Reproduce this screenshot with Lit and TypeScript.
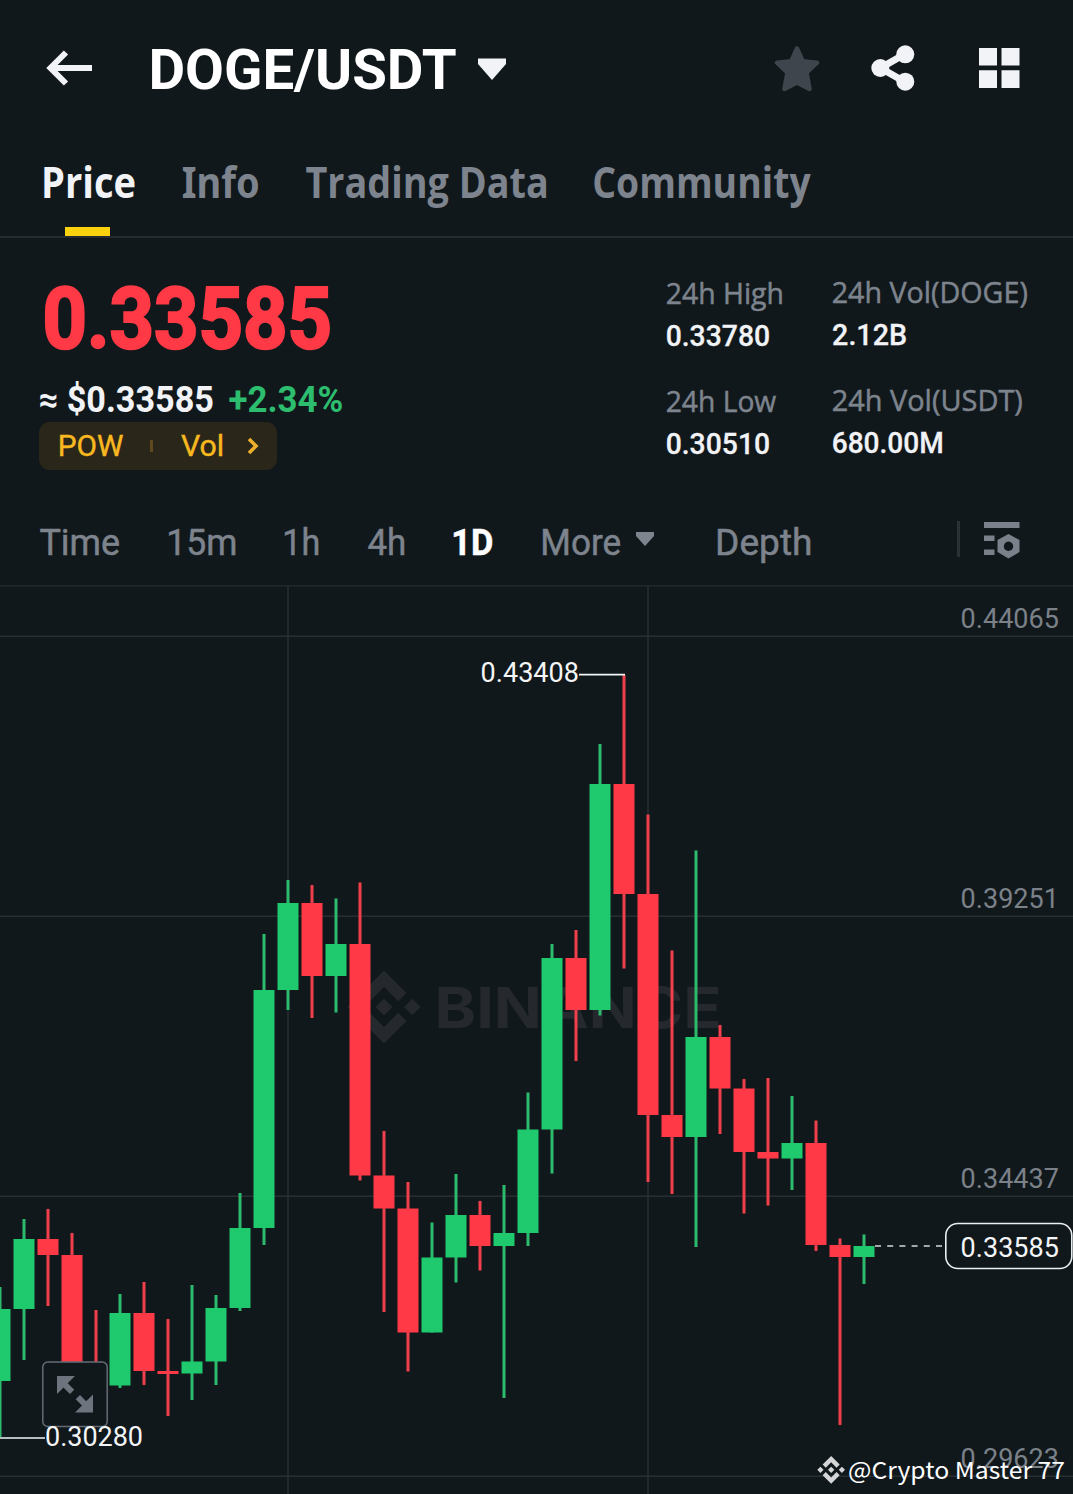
import { LitElement, html, svg, css } from "lit";
import { customElement, property, state } from "lit/decorators.js";
import { classMap } from "lit/directives/class-map.js";

/** A single line of text whose drawn ink spans about `width` pixels. */
@customElement("fit-text")
class FitText extends LitElement {
  static styles = css`
    :host { display: block; flex: none; white-space: nowrap; }
    .line { display: inline-block; transform-origin: 0 50%; }
  `;
  @property({ type: Number }) width = 0;
  @property() text = "";
  @state() private transform = "none";

  firstUpdated() {
    const cs = getComputedStyle(this);
    const size = parseFloat(cs.fontSize);
    const ctx = document.createElement("canvas").getContext("2d")!;
    // Ink bounds come back rounded to whole pixels, so measure enlarged.
    const zoom = 10;
    ctx.font = `${cs.fontWeight} ${size * zoom}px ${cs.fontFamily}`;
    const m = ctx.measureText(this.text);
    const left = m.actualBoundingBoxLeft / zoom;
    const ink = left + m.actualBoundingBoxRight / zoom;
    const scale = this.width / ink;
    this.transform = `translateX(${left * scale}px) scaleX(${scale})`;
    this.style.width = `${this.width}px`;
  }
  render() {
    return html`<span class="line" style="transform:${this.transform}">${this.text}</span>`;
  }
}

type Candle = [up: 0 | 1, high: number, top: number, bottom: number, low: number];

const CANDLES: Candle[] = [
  [1, 1287, 1309, 1381, 1437], [1, 1219, 1239, 1309, 1360], [0, 1209, 1239, 1255, 1306],
  [0, 1233, 1255, 1384, 1390], [0, 1310, 1384, 1386, 1400], [1, 1294, 1313, 1385.5, 1388],
  [0, 1282, 1313, 1371, 1385], [0, 1319, 1371, 1374, 1416], [1, 1285, 1361.5, 1373.5, 1400],
  [1, 1295, 1308, 1361.5, 1385], [1, 1193, 1228, 1308, 1311], [1, 934, 990, 1228, 1245],
  [1, 880, 903, 990, 1010], [0, 885, 903, 976, 1018], [1, 898.5, 944, 976, 1012.5],
  [0, 882.5, 944, 1175.5, 1180.5], [0, 1131, 1175.5, 1208.5, 1312], [0, 1182, 1208.5, 1332.5, 1371.5],
  [1, 1222.5, 1257.5, 1332.5, 1332.5], [1, 1174, 1215, 1257.5, 1282.5], [0, 1201, 1215, 1246, 1270.5],
  [1, 1185, 1233, 1246, 1398], [1, 1092.5, 1129.5, 1233, 1246], [1, 944, 958, 1129.5, 1173.5],
  [0, 930, 958, 1010, 1061], [1, 744, 784, 1010, 1015.5], [0, 675, 784, 894, 968.5],
  [0, 814.5, 894, 1115, 1182], [0, 950.5, 1115, 1137, 1194], [1, 850.5, 1037, 1137, 1247],
  [0, 1025, 1037, 1088.5, 1134], [0, 1079, 1088.5, 1152, 1213.5], [0, 1078, 1152, 1158.5, 1205.5],
  [1, 1096, 1143, 1158.5, 1190], [0, 1120.5, 1143, 1245, 1251], [0, 1238.5, 1245, 1257, 1425],
  [1, 1234.5, 1246, 1257, 1284],
];
const PITCH = 24;
const BODY = 21;

const LEVELS: [number, string][] = [[636, "0.44065"], [916, "0.39251"], [1196, "0.34437"], [1476, "0.29623"]];

const LOGO =
  "M38.73 53.2l24.59-24.58 24.6 24.6 14.3-14.31L63.32 0 24.42 38.9zM0 63.31l14.3-14.31 14.31 14.31-14.31 14.3zM38.73 73.41L63.32 98l24.6-24.6 14.31 14.29-38.9 38.91-38.91-38.88zM98 63.31l14.3-14.31 14.31 14.3-14.31 14.32zM77.83 63.3L63.32 48.78 48.81 63.28 63.32 77.8z";

@customElement("price-chart")
class PriceChart extends LitElement {
  static styles = css`
    :host { display: block; height: 909px; overflow: hidden; }
    svg { display: block; }
    text { font-family: Roboto, "Liberation Sans", sans-serif; font-size: 27px; }
    .grid { stroke: #292e33; stroke-width: 1.5; }
    .edge { stroke: #21262b; stroke-width: 2.5; }
    .axis { fill: #7b8188; }
    .mark { fill: #f3f5f7; }
    .pointer { stroke: #f3f5f7; stroke-width: 1.6; fill: none; }
    .dash { stroke: #d5d8db; stroke-width: 1.6; stroke-dasharray: 6 6.2; }
    .tag { fill: #11181c; stroke: #eceff1; stroke-width: 1.6; }
    .brand { fill: #25282c; }
    .brand text { font-family: Inter, sans-serif; font-size: 57px; font-weight: 700; }
    .up { fill: #1fca6f; }
    .down { fill: #ff3945; }
    .wick.up { fill: #2cbb6c; }
    .wick.down { fill: #f23f4b; }
    .expand rect { fill: #11181c; stroke: #646b74; stroke-width: 1.5; }
    .expand path { fill: #6d747e; }
    .credit path { fill: #d3d5d7; }
    .credit text { font-family: "Noto Sans CJK SC", sans-serif; font-size: 23.5px; fill: #fff; }
  `;

  private candle([up, high, top, bottom, low]: Candle, i: number) {
    const x = i * PITCH;
    const tone = up ? "up" : "down";
    return svg`
      <rect class="wick ${tone}" x=${x - 1.5} y=${high} width="3" height=${low - high}></rect>
      <rect class=${tone} x=${x - BODY / 2} y=${top} width=${BODY} height=${bottom - top}></rect>`;
  }

  render() {
    return html`
      <svg width="1073" height="909" viewBox="0 585 1073 909">
        <line class="edge" x1="0" x2="1073" y1="585.5" y2="585.5"></line>
        ${LEVELS.map(([y]) => svg`<line class="grid" x1="0" x2="1073" y1=${y + 0.25} y2=${y + 0.25}></line>`)}
        <line class="grid" x1="288" x2="288" y1="586" y2="1494"></line>
        <line class="grid" x1="648" x2="648" y1="586" y2="1494"></line>
        <g class="brand">
          <path transform="translate(347.5 970.5) scale(.577)" d=${LOGO}></path>
          <text x="434.500" y="1028" textLength="287" lengthAdjust="spacingAndGlyphs">BINANCE</text>
        </g>
        ${LEVELS.map(([y, label]) => svg`<text class="axis" x="960.5" y=${y - 8.3} textLength="98.500">${label}</text>`)}
        ${CANDLES.map((c, i) => this.candle(c, i))}
        <line class="pointer" x1="579" x2="625" y1="674.6" y2="674.6"></line>
        <text class="mark" x="480.5" y="682" textLength="98.500">0.43408</text>
        <line class="dash" x1="875" x2="943" y1="1246" y2="1246"></line>
        <rect class="tag" x="945.8" y="1223.5" width="126" height="45" rx="12"></rect>
        <text class="mark" x="960.5" y="1256.8" textLength="98.500">0.33585</text>
        <g class="expand">
          <rect x="42.8" y="1362" width="64.4" height="64.4" rx="5"></rect>
          <path d="M57 1376H75L67.700 1383.300L74.200 1389.800L70 1394L63.500 1387.500L57 1394zM93 1394.500V1412.500H75L82 1405.500L75.700 1399.200L80 1395L86.200 1401.300z"></path>
        </g>
        <line class="pointer" x1="0" x2="45" y1="1438" y2="1438"></line>
        <text class="mark" x="45" y="1446" textLength="98">0.30280</text>
        <g class="credit">
          <path transform="translate(817.3 1456) scale(.219)" d=${LOGO}></path>
          <text x="848" y="1478.7" textLength="217" lengthAdjust="spacingAndGlyphs">@Crypto Master 77</text>
        </g>
      </svg>`;
  }
}

@customElement("app-root")
class AppRoot extends LitElement {
  static styles = css`
    :host {
      display: block; width: 1073px; height: 1494px; overflow: hidden;
      background: #11181c; color: #f1f3f6;
      font-family: Roboto, "Liberation Sans", sans-serif;
    }
    svg { display: block; flex: none; }
    .row { display: flex; box-sizing: border-box; }
    .header { height: 140px; padding: 0 53px 0 46px; align-items: flex-start; }
    .back { margin-top: 48px; }
    .pair { margin: 39px 0 0 60px; font-size: 56px; line-height: 62px; font-weight: 700; color: #fff; }
    .caret { margin: 58px 0 0 22px; }
    .actions { margin: 45px 0 0 auto; display: flex; }
    .share { margin-left: 51px; }
    .apps { margin: 3px 0 0 64px; }

    .tabs { height: 98px; padding: 12px 0 0 44px; gap: 48px; border-bottom: 2px solid #252b30; }
    .tab { position: relative; font: 700 43px/60px "Open Sans", sans-serif; color: #7d848d; }
    .tab.slab { font-family: "Noto Sans", sans-serif; }
    .tab.active { color: #f1f3f6; }
    .tab.active::after {
      content: ""; position: absolute; left: 21px; bottom: 0; width: 45px; height: 9px; background: #fcd10e;
    }

    .summary { height: 262px; padding-top: 38px; }
    .quote { width: 666px; padding-left: 39px; box-sizing: border-box; }
    .last {
      margin: 0 0 0 6px; font-size: 86px; line-height: 85px; font-weight: 700; color: #ff3945;
      -webkit-text-stroke: 2.5px #ff3945;
    }
    .sub { display: flex; gap: 16px; margin-top: 17px; padding-left: 1px; font-size: 36px; line-height: 44px; font-weight: 700; }
    .gain { color: #2dbd6e; }
    .tags {
      display: flex; align-items: center; box-sizing: border-box; width: 238px; height: 48px;
      padding-left: 21px; border-radius: 11px; background: #2a271a; color: #f8b820;
      font: 400 30px/48px Roboto, sans-serif; -webkit-text-stroke: .4px;
    }
    .bar { width: 3px; height: 12px; margin: 0 28px 0 27px; background: #5f4a1e; }
    .chev { margin-left: 25px; }
    .stats { display: grid; grid-template-columns: 166px auto; row-gap: 24px; align-content: start; }
    .stat { padding-left: 1px; line-height: 42px; margin-top: -4px; margin-bottom: 4px; }
    .stat.right { margin-top: -5px; }
    .label { font: 400 30px/42px "Open Sans", sans-serif; color: #7d848d; -webkit-text-stroke: .5px; }
    .value { font-size: 30px; font-weight: 500; line-height: 44px; margin-bottom: -2px; -webkit-text-stroke: .3px; }

    .frames { height: 85px; padding: 20px 53px 0 40px; font-size: 36px; line-height: 46px; font-weight: 400; color: #7d848d; -webkit-text-stroke: .5px; }
    .frame { margin-right: 50px; }
    .frame.active { color: #fff; font-weight: 700; }
    .more { margin: 0 16px 0 1px; }
    .drop { margin: 12px 64px 0 0; }
    .rule { width: 3px; height: 36px; margin: 1px 24px 0 auto; background: #2c3136; }
    .tools { margin-top: 2px; }
  `;

  @state() private tab = "Price";

  private tabs: [string, number][] = [["Price", 91], ["Info", 75], ["Trading Data", 240], ["Community", 217]];
  private frames: [string, number][] = [["Time", 79], ["15m", 66], ["1h", 33], ["4h", 36], ["1D", 38]];
  private stats: [string, number, string, number][] = [
    ["24h High", 115, "0.33780", 102], ["24h Vol(DOGE)", 194, "2.12B", 73],
    ["24h Low", 109, "0.30510", 102], ["24h Vol(USDT)", 189, "680.00M", 109],
  ];

  render() {
    return html`
      <header class="row header">
        <svg class="back" width="46" height="40" viewBox="0 0 46 40">
          <path d="M46 20H5M20 4.500L4.500 20 20 35.500" fill="none" stroke="#f1f3f6" stroke-width="6"></path>
        </svg>
        <fit-text class="pair" width="304" text="DOGE/USDT"></fit-text>
        <svg class="caret" width="28" height="23" viewBox="0 0 28 23"><path d="M0 .5h28v5.500L14 22 0 6z" fill="#f1f3f6"></path></svg>
        <div class="actions">
          <svg width="46" height="48" viewBox="0 0 46 48">
            <path d="M23 3.500l5.700 12.700 14.300 1.500-10.500 9.800 3 16.500L23 37.500 10.500 44l3-16.500L3 17.700l14.300-1.500z" fill="#3f454c" stroke="#3f454c" stroke-width="4.500" stroke-linejoin="round"></path>
          </svg>
          <svg class="share" width="44" height="46" viewBox="0 0 44 46">
            <path d="M34 9L9.500 23 34 37" fill="none" stroke="#f1f3f6" stroke-width="7"></path>
            <g fill="#f1f3f6"><circle cx="34.300" cy="9.300" r="9"></circle><circle cx="9.300" cy="23" r="9"></circle><circle cx="34.300" cy="36.700" r="9"></circle></g>
          </svg>
          <svg class="apps" width="41" height="40" viewBox="0 0 41 40">
            <path d="M0 0h18v17.500H0zM22.500 0h18v17.500h-18zM0 22.300h18V40H0zM22.500 22.300h18V40h-18z" fill="#f1f3f6"></path>
          </svg>
        </div>
      </header>

      <nav class="row tabs">
        ${this.tabs.map(([name, width]) => html`
          <fit-text
            class=${classMap({ tab: true, slab: name === "Info", active: name === this.tab })}
            width=${width} text=${name} @click=${() => (this.tab = name)}
          ></fit-text>`)}
      </nav>

      <section class="row summary">
        <div class="quote">
          <fit-text class="last" width="285" text="0.33585"></fit-text>
          <div class="sub">
            <fit-text width="173" text="≈ $0.33585"></fit-text>
            <fit-text class="gain" width="113" text="+2.34%"></fit-text>
          </div>
          <div class="tags">
            <fit-text width="63" text="POW"></fit-text>
            <span class="bar"></span>
            <fit-text width="41" text="Vol"></fit-text>
            <svg class="chev" width="12" height="18" viewBox="0 0 12 18"><path d="M2 2l7 7-7 7" fill="none" stroke="#eeb02a" stroke-width="3.600"></path></svg>
          </div>
        </div>
        <div class="stats">
          ${this.stats.map(([label, lw, value, vw], i) => html`
            <div class=${classMap({ stat: true, right: i % 2 === 1 })}>
              <fit-text class="label" width=${lw} text=${label}></fit-text>
              <fit-text class="value" width=${vw} text=${value}></fit-text>
            </div>`)}
        </div>
      </section>

      <nav class="row frames">
        ${this.frames.map(([name, width]) => html`
          <fit-text class=${classMap({ frame: true, active: name === "1D" })} width=${width} text=${name}></fit-text>`)}
        <fit-text class="more" width="77" text="More"></fit-text>
        <svg class="drop" width="18" height="15" viewBox="0 0 18 15"><path d="M0 0h18v4L9 14 0 4z" fill="#7d848d"></path></svg>
        <fit-text width="92" text="Depth"></fit-text>
        <span class="rule"></span>
        <svg class="tools" width="36" height="37" viewBox="0 0 36 37">
          <path fill="#7a818b" fill-rule="evenodd" d="M0 0h35.500v6H0zM0 13.500h10.500v5.500H0zM0 27.500h10.500V33H0zM24.500 12l11 6v12l-11 6.500-11-6.500V18zM24.500 19.600a4.700 4.700 0 1 0 .01 0z"></path>
        </svg>
      </nav>

      <price-chart></price-chart>`;
  }
}
